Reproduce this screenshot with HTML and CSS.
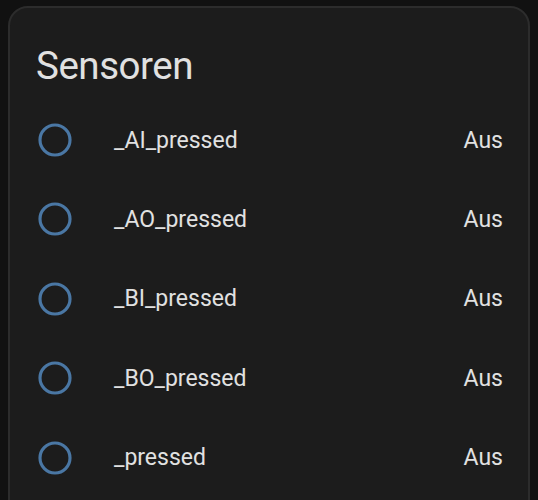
FILE: index.html
```html
<!DOCTYPE html>
<html lang="de">
  <head>
    <meta charset="UTF-8" />
    <meta name="viewport" content="width=device-width, initial-scale=1.0" />
    <title>Sensoren</title>
    <link rel="stylesheet" href="styles.css">
  </head>
  <body>
    <div class="card">
      <h1 class="card-header">Sensoren</h1>

      <!-- Entitäten -->
      <div class="card-content">
        <div class="entity-row">
          <svg class="state-icon" viewBox="0 0 24 24"><circle cx="12" cy="12" r="9" /></svg>
          <span class="entity-name">_AI_pressed</span>
          <span class="entity-state">Aus</span>
        </div>
        <div class="entity-row">
          <svg class="state-icon" viewBox="0 0 24 24"><circle cx="12" cy="12" r="9" /></svg>
          <span class="entity-name">_AO_pressed</span>
          <span class="entity-state">Aus</span>
        </div>
        <div class="entity-row">
          <svg class="state-icon" viewBox="0 0 24 24"><circle cx="12" cy="12" r="9" /></svg>
          <span class="entity-name">_BI_pressed</span>
          <span class="entity-state">Aus</span>
        </div>
        <div class="entity-row">
          <svg class="state-icon" viewBox="0 0 24 24"><circle cx="12" cy="12" r="9" /></svg>
          <span class="entity-name">_BO_pressed</span>
          <span class="entity-state">Aus</span>
        </div>
        <div class="entity-row">
          <svg class="state-icon" viewBox="0 0 24 24"><circle cx="12" cy="12" r="9" /></svg>
          <span class="entity-name">_pressed</span>
          <span class="entity-state">Aus</span>
        </div>
      </div>
    </div>
  </body>
</html>
```

FILE: styles.css
```css
body {
  font-family: Roboto, "Noto Sans", Arial, sans-serif;
  margin: 0;
  padding: 6px 8px 0;
  background-color: #111111;
  color: #e1e1e1;
  overflow: hidden;
}

.card {
  width: 522px;
  box-sizing: border-box;
  height: 520px;
  background-color: #1c1c1c;
  border: 2px solid #2c2c2c;
  border-radius: 20px;
}

.card-header {
  margin: 0;
  padding: 38px 25px 0 26px;
  font-size: 38.5px;
  font-weight: 400;
  line-height: 40px;
  letter-spacing: -0.012em;
}

.card-content {
  display: flex;
  flex-direction: column;
  gap: 13.4px;
  padding: 21px 25px 0;
}

.entity-row {
  display: flex;
  align-items: center;
  height: 66px;
  font-size: 23px;
}

.state-icon {
  width: 40px;
  height: 40px;
  flex: none;
  fill: none;
  stroke: #4a77a4;
  stroke-width: 1.9;
}

.entity-name {
  flex: 1;
  margin-left: 39px;
}
```
